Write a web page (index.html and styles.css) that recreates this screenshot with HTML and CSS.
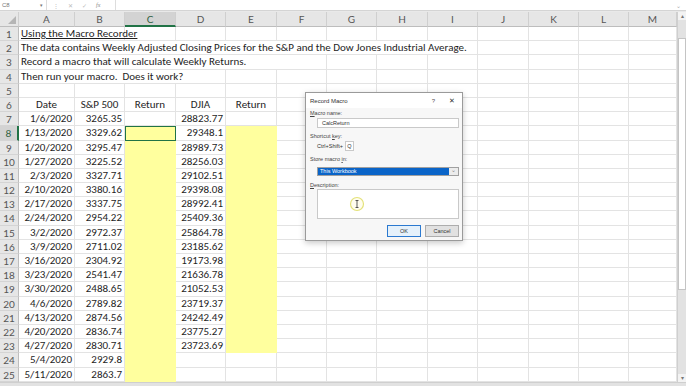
FILE: index.html
```html
<!DOCTYPE html>
<html lang="en">
<head>
  <meta charset="UTF-8">
  <title>Macro Recorder</title>
  <link rel="stylesheet" href="styles.css">
</head>
<body>
  <div class="app">
    <div class="formula">
      <div class="namebox">C8<span class="caret">&#9662;</span></div>
      <div class="fbtns"><span class="dots">&#8942;</span><span>&#10005;</span><span>&#10003;</span><span class="fx">fx</span></div>
      <div class="finput"></div>
      <span class="fexpand">&#8964;</span>
    </div>

    <div class="main">
      <div class="sheet">
        <!-- column headers -->
        <div class="h corner"><svg width="10" height="10" viewBox="0 0 10 10"><path d="M10 2 L10 10 L2 10 Z" fill="#b5b5b5"/></svg></div>
        <div class="h">A</div><div class="h">B</div><div class="h sel">C</div><div class="h">D</div><div class="h">E</div><div class="h">F</div><div class="h">G</div><div class="h">H</div><div class="h">I</div><div class="h">J</div><div class="h">K</div><div class="h">L</div><div class="h">M</div>

        <div class="r">1</div><div class="c t s2"><u>Using the Macro Recorder</u></div><div class="c"></div><div class="c"></div><div class="c"></div><div class="c"></div><div class="c"></div><div class="c"></div><div class="c"></div><div class="c"></div><div class="c"></div><div class="c"></div><div class="c"></div>
        <div class="r">2</div><div class="c t s9">The data contains Weekly Adjusted Closing Prices for the S&amp;P and the Dow Jones Industrial Average.</div><div class="c"></div><div class="c"></div><div class="c"></div><div class="c"></div>
        <div class="r">3</div><div class="c t s6">Record a macro that will calculate Weekly Returns.</div><div class="c"></div><div class="c"></div><div class="c"></div><div class="c"></div><div class="c"></div><div class="c"></div><div class="c"></div>
        <div class="r">4</div><div class="c t s4">Then run your macro.&nbsp; Does it work?</div><div class="c"></div><div class="c"></div><div class="c"></div><div class="c"></div><div class="c"></div><div class="c"></div><div class="c"></div><div class="c"></div><div class="c"></div>
        <div class="r">5</div><div class="c"></div><div class="c"></div><div class="c"></div><div class="c"></div><div class="c"></div><div class="c"></div><div class="c"></div><div class="c"></div><div class="c"></div><div class="c"></div><div class="c"></div><div class="c"></div><div class="c"></div>
        <div class="r">6</div><div class="c m">Date</div><div class="c m">S&amp;P 500</div><div class="c m">Return</div><div class="c m">DJIA</div><div class="c m">Return</div><div class="c"></div><div class="c"></div><div class="c"></div><div class="c"></div><div class="c"></div><div class="c"></div><div class="c"></div><div class="c"></div>

        <div class="r">7</div><div class="c n">1/6/2020</div><div class="c n">3265.35</div><div class="c"></div><div class="c n">28823.77</div><div class="c"></div><div class="c"></div><div class="c"></div><div class="c"></div><div class="c"></div><div class="c"></div><div class="c"></div><div class="c"></div><div class="c"></div>
        <div class="r sel">8</div><div class="c n">1/13/2020</div><div class="c n">3329.62</div><div class="c y active"></div><div class="c n">29348.1</div><div class="c y"></div><div class="c"></div><div class="c"></div><div class="c"></div><div class="c"></div><div class="c"></div><div class="c"></div><div class="c"></div><div class="c"></div>
        <div class="r">9</div><div class="c n">1/20/2020</div><div class="c n">3295.47</div><div class="c y"></div><div class="c n">28989.73</div><div class="c y"></div><div class="c"></div><div class="c"></div><div class="c"></div><div class="c"></div><div class="c"></div><div class="c"></div><div class="c"></div><div class="c"></div>
        <div class="r">10</div><div class="c n">1/27/2020</div><div class="c n">3225.52</div><div class="c y"></div><div class="c n">28256.03</div><div class="c y"></div><div class="c"></div><div class="c"></div><div class="c"></div><div class="c"></div><div class="c"></div><div class="c"></div><div class="c"></div><div class="c"></div>
        <div class="r">11</div><div class="c n">2/3/2020</div><div class="c n">3327.71</div><div class="c y"></div><div class="c n">29102.51</div><div class="c y"></div><div class="c"></div><div class="c"></div><div class="c"></div><div class="c"></div><div class="c"></div><div class="c"></div><div class="c"></div><div class="c"></div>
        <div class="r">12</div><div class="c n">2/10/2020</div><div class="c n">3380.16</div><div class="c y"></div><div class="c n">29398.08</div><div class="c y"></div><div class="c"></div><div class="c"></div><div class="c"></div><div class="c"></div><div class="c"></div><div class="c"></div><div class="c"></div><div class="c"></div>
        <div class="r">13</div><div class="c n">2/17/2020</div><div class="c n">3337.75</div><div class="c y"></div><div class="c n">28992.41</div><div class="c y"></div><div class="c"></div><div class="c"></div><div class="c"></div><div class="c"></div><div class="c"></div><div class="c"></div><div class="c"></div><div class="c"></div>
        <div class="r">14</div><div class="c n">2/24/2020</div><div class="c n">2954.22</div><div class="c y"></div><div class="c n">25409.36</div><div class="c y"></div><div class="c"></div><div class="c"></div><div class="c"></div><div class="c"></div><div class="c"></div><div class="c"></div><div class="c"></div><div class="c"></div>
        <div class="r">15</div><div class="c n">3/2/2020</div><div class="c n">2972.37</div><div class="c y"></div><div class="c n">25864.78</div><div class="c y"></div><div class="c"></div><div class="c"></div><div class="c"></div><div class="c"></div><div class="c"></div><div class="c"></div><div class="c"></div><div class="c"></div>
        <div class="r">16</div><div class="c n">3/9/2020</div><div class="c n">2711.02</div><div class="c y"></div><div class="c n">23185.62</div><div class="c y"></div><div class="c"></div><div class="c"></div><div class="c"></div><div class="c"></div><div class="c"></div><div class="c"></div><div class="c"></div><div class="c"></div>
        <div class="r">17</div><div class="c n">3/16/2020</div><div class="c n">2304.92</div><div class="c y"></div><div class="c n">19173.98</div><div class="c y"></div><div class="c"></div><div class="c"></div><div class="c"></div><div class="c"></div><div class="c"></div><div class="c"></div><div class="c"></div><div class="c"></div>
        <div class="r">18</div><div class="c n">3/23/2020</div><div class="c n">2541.47</div><div class="c y"></div><div class="c n">21636.78</div><div class="c y"></div><div class="c"></div><div class="c"></div><div class="c"></div><div class="c"></div><div class="c"></div><div class="c"></div><div class="c"></div><div class="c"></div>
        <div class="r">19</div><div class="c n">3/30/2020</div><div class="c n">2488.65</div><div class="c y"></div><div class="c n">21052.53</div><div class="c y"></div><div class="c"></div><div class="c"></div><div class="c"></div><div class="c"></div><div class="c"></div><div class="c"></div><div class="c"></div><div class="c"></div>
        <div class="r">20</div><div class="c n">4/6/2020</div><div class="c n">2789.82</div><div class="c y"></div><div class="c n">23719.37</div><div class="c y"></div><div class="c"></div><div class="c"></div><div class="c"></div><div class="c"></div><div class="c"></div><div class="c"></div><div class="c"></div><div class="c"></div>
        <div class="r">21</div><div class="c n">4/13/2020</div><div class="c n">2874.56</div><div class="c y"></div><div class="c n">24242.49</div><div class="c y"></div><div class="c"></div><div class="c"></div><div class="c"></div><div class="c"></div><div class="c"></div><div class="c"></div><div class="c"></div><div class="c"></div>
        <div class="r">22</div><div class="c n">4/20/2020</div><div class="c n">2836.74</div><div class="c y"></div><div class="c n">23775.27</div><div class="c y"></div><div class="c"></div><div class="c"></div><div class="c"></div><div class="c"></div><div class="c"></div><div class="c"></div><div class="c"></div><div class="c"></div>
        <div class="r">23</div><div class="c n">4/27/2020</div><div class="c n">2830.71</div><div class="c y"></div><div class="c n">23723.69</div><div class="c y"></div><div class="c"></div><div class="c"></div><div class="c"></div><div class="c"></div><div class="c"></div><div class="c"></div><div class="c"></div><div class="c"></div>
        <div class="r">24</div><div class="c n">5/4/2020</div><div class="c n">2929.8</div><div class="c y"></div><div class="c"></div><div class="c"></div><div class="c"></div><div class="c"></div><div class="c"></div><div class="c"></div><div class="c"></div><div class="c"></div><div class="c"></div><div class="c"></div>
        <div class="r">25</div><div class="c n">5/11/2020</div><div class="c n">2863.7</div><div class="c y"></div><div class="c"></div><div class="c"></div><div class="c"></div><div class="c"></div><div class="c"></div><div class="c"></div><div class="c"></div><div class="c"></div><div class="c"></div><div class="c"></div>
      </div>

      <div class="vscroll">
        <div class="arrow">&#9652;</div>
        <div class="thumb"></div>
        <div class="track"></div>
        <div class="arrow">&#9662;</div>
      </div>
    </div>

    <div class="tabs"></div>

    <!-- Record Macro dialog -->
    <div class="dialog">
      <div class="dtitle"><span>Record Macro</span><span class="help">?</span><span class="close">&#10005;</span></div>
      <div class="dbody">
        <label><u>M</u>acro name:</label>
        <div class="field">CalcReturn</div>
        <label>Shortcut <u>k</u>ey:</label>
        <div class="shortcut">Ctrl+Shift+ <span class="key">Q</span></div>
        <label>Store macro <u>i</u>n:</label>
        <div class="select"><span class="opt">This Workbook</span><span class="dd">&#8964;</span></div>
        <label class="desc"><u>D</u>escription:</label>
        <div class="field area"></div>
        <div class="buttons"><span class="btn ok">OK</span><span class="btn">Cancel</span></div>
      </div>
      <svg class="cursor" width="16" height="16" viewBox="0 0 16 16">
        <circle cx="8" cy="8" r="6.5" fill="#fffbe0" fill-opacity="0.5" stroke="#e4e27a" stroke-width="1.2"/>
        <path d="M6.5 4.5 H9.5 M8 4.5 V11.5 M6.5 11.5 H9.5" stroke="#333" stroke-width="0.8" fill="none"/>
      </svg>
    </div>
  </div>
</body>
</html>
```

FILE: styles.css
```css
body {
  margin: 0;
  background: #fff;
  font-family: "Liberation Sans", sans-serif;
}

.app {
  position: relative;
  width: 686px;
  height: 386px;
  overflow: hidden;
  background: #e9e9e9;
}

/* formula bar */
.formula {
  display: flex;
  align-items: center;
  height: 10px;
  background: #fff;
  border-bottom: 1px solid #d4d4d4;
  margin-bottom: 1px;
  font-size: 6px;
  color: #777;
}

.namebox {
  width: 44px;
  padding-left: 2px;
  display: flex;
  justify-content: space-between;
  border-right: 1px solid #ddd;
  height: 10px;
  align-items: center;
}

.caret {
  font-size: 5px;
  padding-right: 3px;
}

.fbtns {
  display: flex;
  gap: 9px;
  width: 62px;
  padding-left: 6px;
  color: #bbb;
}

.fbtns .fx {
  font-style: italic;
  font-family: "Liberation Serif", serif;
  color: #888;
}

.finput {
  flex: 1;
  height: 10px;
  border-left: 1px solid #ddd;
}

.fexpand {
  width: 10px;
  color: #aaa;
}

/* sheet grid */
.main {
  display: flex;
  height: 370px;
}

.sheet {
  display: grid;
  grid-template-columns: 19px 56px 50px 51px 50px 51px 50px 50px 51px 50px 51px 50px 50px 48px;
  grid-template-rows: 15px repeat(25, 14.2px);
  width: 677px;
  background: #fff;
  font-family: Carlito, "Liberation Sans Narrow", "Liberation Sans", sans-serif;
  font-size: 11px;
  color: #1e1e1e;
}

.sheet > div {
  box-sizing: border-box;
  white-space: nowrap;
  line-height: 14px;
}

.h {
  background: #e6e6e6;
  border-right: 1px solid #cfcfcf;
  border-bottom: 1px solid #bdbdbd;
  color: #555;
  font-family: Lato, "Liberation Sans", sans-serif;
  font-size: 10px;
  text-align: center;
  line-height: 15px !important;
}

.h.sel {
  background: #d3d3d3;
  color: #2f5f3f;
  border-bottom: 2px solid #217346;
}

.corner {
  display: flex;
  align-items: flex-end;
  justify-content: flex-end;
  padding: 0 2px 2px 0;
}

.r {
  background: #e6e6e6;
  border-right: 1px solid #bdbdbd;
  border-bottom: 1px solid #d4d4d4;
  color: #555;
  font-family: Lato, "Liberation Sans", sans-serif;
  font-size: 10px;
  text-align: center;
}

.r.sel {
  background: #d3d3d3;
  color: #2f5f3f;
  border-right: 2px solid #217346;
}

.c {
  border-right: 1px solid #e3e3e3;
  border-bottom: 1px solid #e3e3e3;
  padding: 0 2px;
}

.t {
  padding-left: 2px;
}

.s2 { grid-column: span 2; }
.s4 { grid-column: span 4; }
.s6 { grid-column: span 6; }
.s9 { grid-column: span 9; }

.n {
  text-align: right;
}

.m {
  text-align: center;
}

.y {
  background: #ffff9e;
  border-right-color: #ffff9e;
  border-bottom-color: #ffff9e;
}

.active {
  border: 1px solid #217346 !important;
}

/* vertical scrollbar */
.vscroll {
  width: 9px;
  display: flex;
  flex-direction: column;
  background: #e2e2e2;
  border-left: 1px solid #cfcfcf;
  box-sizing: border-box;
}

.vscroll .arrow {
  height: 8px;
  font-size: 6px;
  line-height: 8px;
  text-align: center;
  color: #777;
  background: #f3f3f3;
}

.vscroll .thumb {
  height: 250px;
  background: #fff;
  border: 1px solid #c4c4c4;
  margin-top: 18px;
}

.vscroll .track {
  flex: 1;
}

.tabs {
  height: 4px;
  background: #e2e2e2;
  border-top: 1px solid #cfcfcf;
}

/* Record Macro dialog */
.dialog {
  position: absolute;
  left: 305px;
  top: 92px;
  width: 158px;
  height: 149px;
  box-sizing: border-box;
  background: #fff;
  border: 1px solid #9a9a9a;
  box-shadow: 0 2px 6px rgba(0, 0, 0, 0.22);
  font-family: "Liberation Sans", sans-serif;
  font-size: 5.5px;
  color: #333;
}

.dtitle {
  display: flex;
  align-items: center;
  height: 15px;
  padding: 0 4px;
  font-size: 6px;
}

.dtitle span:first-child {
  flex: 1;
}

.dtitle .help {
  margin-right: 14px;
  color: #555;
}

.dtitle .close {
  margin-right: 3px;
  font-size: 6.5px;
}

.dbody {
  display: flex;
  flex-direction: column;
  padding: 0 3px 0 4px;
  background: #f7f7f7;
  height: 132px;
}

.dbody label {
  margin-top: 5px;
  height: 7px;
  line-height: 7px;
  color: #444;
}

.dbody label:first-child {
  margin-top: 2px;
}

.dbody label.desc {
  margin-top: 6px;
}

.field {
  margin: 1px 0 0 7px;
  height: 10px;
  line-height: 8px;
  background: #fff;
  border: 1px solid #c9c9c9;
  box-sizing: border-box;
  padding-left: 4px;
}

.field.area {
  height: 30px;
  margin-top: 0;
}

.shortcut {
  margin: 1px 0 0 7px;
  display: flex;
  align-items: center;
  gap: 2px;
  height: 10px;
}

.key {
  display: inline-block;
  width: 9px;
  height: 10px;
  line-height: 8px;
  text-align: center;
  background: #fff;
  border: 1px solid #c9c9c9;
  box-sizing: border-box;
}

.select {
  margin: 4px 0 0 7px;
  display: flex;
  height: 9px;
  box-sizing: border-box;
  border: 1px solid #a0a0a0;
  background: #fff;
}

.select .opt {
  flex: 1;
  background: #0a64c8;
  color: #fff;
  line-height: 7px;
  padding-left: 2px;
}

.select .dd {
  width: 9px;
  text-align: center;
  color: #888;
  background: #ececec;
  line-height: 4px;
}

.buttons {
  display: flex;
  justify-content: flex-end;
  gap: 4px;
  margin-top: 6px;
}

.btn {
  width: 34px;
  height: 12px;
  line-height: 10px;
  box-sizing: border-box;
  text-align: center;
  background: #e1e1e1;
  border: 1px solid #adadad;
}

.btn.ok {
  border: 1px solid #2b79d0;
  background: #e5f1fb;
}

.cursor {
  position: absolute;
  left: 43px;
  top: 103px;
}
```
